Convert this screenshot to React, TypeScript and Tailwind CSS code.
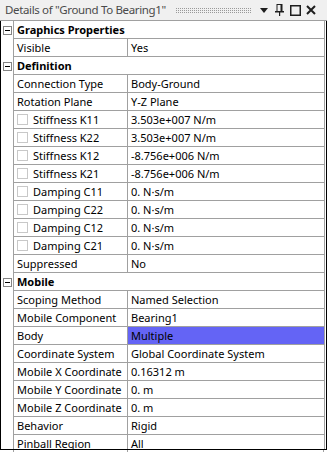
import React from "react";

type Row =
  | { kind: "section"; label: string }
  | { kind: "prop"; label: string; value: string; check?: boolean; selected?: boolean };

const rows: Row[] = [
  { kind: "section", label: "Graphics Properties" },
  { kind: "prop", label: "Visible", value: "Yes" },
  { kind: "section", label: "Definition" },
  { kind: "prop", label: "Connection Type", value: "Body-Ground" },
  { kind: "prop", label: "Rotation Plane", value: "Y-Z Plane" },
  { kind: "prop", label: "Stiffness K11", value: "3.503e+007 N/m", check: true },
  { kind: "prop", label: "Stiffness K22", value: "3.503e+007 N/m", check: true },
  { kind: "prop", label: "Stiffness K12", value: "-8.756e+006 N/m", check: true },
  { kind: "prop", label: "Stiffness K21", value: "-8.756e+006 N/m", check: true },
  { kind: "prop", label: "Damping C11", value: "0. N·s/m", check: true },
  { kind: "prop", label: "Damping C22", value: "0. N·s/m", check: true },
  { kind: "prop", label: "Damping C12", value: "0. N·s/m", check: true },
  { kind: "prop", label: "Damping C21", value: "0. N·s/m", check: true },
  { kind: "prop", label: "Suppressed", value: "No" },
  { kind: "section", label: "Mobile" },
  { kind: "prop", label: "Scoping Method", value: "Named Selection" },
  { kind: "prop", label: "Mobile Component", value: "Bearing1" },
  { kind: "prop", label: "Body", value: "Multiple", selected: true },
  { kind: "prop", label: "Coordinate System", value: "Global Coordinate System" },
  { kind: "prop", label: "Mobile X Coordinate", value: "0.16312 m" },
  { kind: "prop", label: "Mobile Y Coordinate", value: "0. m" },
  { kind: "prop", label: "Mobile Z Coordinate", value: "0. m" },
  { kind: "prop", label: "Behavior", value: "Rigid" },
  { kind: "prop", label: "Pinball Region", value: "All" },
];

// dotted drag handle between the caption and the buttons
function Grip() {
  return (
    <div className="min-w-0 flex-1">
      <svg width="100%" height="5" className="block">
        <defs>
          <pattern id="grip" width="2" height="2" patternUnits="userSpaceOnUse">
            <rect x="0" y="0" width="1" height="1" fill="#999999" />
          </pattern>
        </defs>
        <rect x="0" y="0" width="100%" height="5" fill="url(#grip)" />
      </svg>
    </div>
  );
}

function TitleIcons() {
  return (
    <div className="flex shrink-0 items-center">
      <svg width="8" height="5" className="ml-[9px]">
        <polygon points="0,0 8,0 4,5" fill="#1e1e1e" />
      </svg>
      <svg width="9" height="12" className="ml-[7px]">
        <rect x="2" y="0.5" width="5" height="7" fill="none" stroke="#1e1e1e" />
        <rect x="5.5" y="0.5" width="1.5" height="7" fill="#1e1e1e" />
        <rect x="0" y="7" width="9" height="1.5" fill="#1e1e1e" />
        <rect x="4" y="8" width="1.2" height="4" fill="#1e1e1e" />
      </svg>
      <svg width="11" height="11" className="ml-[6px]">
        <rect x="0.75" y="0.75" width="9.5" height="9.5" fill="none" stroke="#1e1e1e" strokeWidth="1.5" />
      </svg>
      <svg width="10" height="10" className="ml-[5px]">
        <path d="M1 1 L9 9 M9 1 L1 9" stroke="#1e1e1e" strokeWidth="2" />
      </svg>
    </div>
  );
}

function Minus() {
  return (
    <div className="flex h-[9px] w-[9px] items-center justify-center border border-[#848484] bg-white">
      <div className="h-[1px] w-[5px] bg-black" />
    </div>
  );
}

function TableRow({ row }: { row: Row }) {
  return (
    <div className="flex h-[18px] shrink-0">
      <div className="flex w-[12px] items-center justify-center">
        {row.kind === "section" && <Minus />}
      </div>
      <div className="flex w-[312px] border-x border-b border-[#a0a0a0]">
        {row.kind === "section" ? (
          <div className="flex items-center pl-[3px] font-bold">{row.label}</div>
        ) : (
          <>
            <div className="flex w-[113px] items-center pl-[3px] whitespace-nowrap">
              {row.check && (
                <div className="mr-[5px] h-[11px] w-[11px] border border-[#c8c8c8] bg-white" />
              )}
              {row.label}
            </div>
            <div
              className={`flex flex-1 items-center border-l border-[#a0a0a0] pl-[3px] whitespace-nowrap ${
                row.selected ? "bg-[#6464f5]" : ""
              }`}
            >
              {row.value}
            </div>
          </>
        )}
      </div>
    </div>
  );
}

export default function App() {
  return (
    <div
      className="h-[452px] w-[327px] overflow-hidden bg-white text-[11px] leading-none text-black"
      style={{ fontFamily: '"Noto Sans", "Liberation Sans", sans-serif' }}
    >
      <div className="flex h-[21px] items-center border-b border-[#a0a0a0] bg-[#f0f0f0] pl-[5px] pr-[11px]">
        <span className="mr-[10px] shrink-0 whitespace-nowrap text-[11.5px] tracking-[-0.35px] text-[#4a4a4a]">
          Details of "Ground To Bearing1"
        </span>
        <Grip />
        <TitleIcons />
      </div>

      <div className="flex h-[429px] flex-col overflow-hidden border-x border-b border-black">
        {rows.map((r, i) => (
          <TableRow key={i} row={r} />
        ))}
      </div>

      <div className="flex h-[2px]">
        <div className="w-[13px]" />
        <div className="w-[114px] border-l border-[#a0a0a0]" />
        <div className="w-[197px] border-x border-[#a0a0a0]" />
      </div>
    </div>
  );
}
